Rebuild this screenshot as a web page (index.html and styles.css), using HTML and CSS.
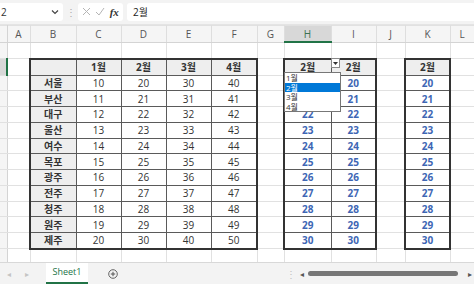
FILE: index.html
```html
<!DOCTYPE html>
<html lang="ko">
<head>
  <meta charset="UTF-8" />
  <title>월별 선택</title>
  <link rel="stylesheet" href="styles.css">
</head>
<body>
  <div class="formula-bar">
    <div class="name-box">
      <span>2</span>
      <svg width="8" height="6" viewBox="0 0 8 6"><path d="M1 1.5 L4 4.5 L7 1.5" fill="none" stroke="#444" stroke-width="1.2"/></svg>
    </div>
    <span class="grip">⋮</span>
    <div class="fx-box">
      <svg width="9" height="9" viewBox="0 0 9 9"><path d="M1 1 L8 8 M8 1 L1 8" stroke="#b5b5b5" stroke-width="1"/></svg>
      <svg width="10" height="9" viewBox="0 0 10 9"><path d="M1 5 L4 8 L9 1" fill="none" stroke="#b5b5b5" stroke-width="1"/></svg>
      <i class="fx">fx</i>
    </div>
    <div class="formula">2월</div>
  </div>

  <div class="sheet-wrap">
    <table class="sheet">
      <colgroup>
        <col style="width:7px"><col style="width:23px"><col style="width:46px"><col style="width:45px"><col style="width:45px"><col style="width:45px"><col style="width:46px"><col style="width:27px"><col style="width:47px"><col style="width:45px"><col style="width:29px"><col style="width:45px"><col style="width:24px">
      </colgroup>
      <tr class="col-head">
        <th class="rh"></th><th>A</th><th>B</th><th>C</th><th>D</th><th>E</th><th>F</th><th>G</th><th class="sel">H</th><th>I</th><th>J</th><th>K</th><th>L</th>
      </tr>
      <tr>
        <td class="rh"></td><td></td><td></td><td></td><td></td><td></td><td></td><td></td><td></td><td></td><td></td><td></td><td></td>
      </tr>
      <tr>
        <td class="rh sel"></td><td></td>
        <td class="hd top lft"></td><td class="hd top">1월</td><td class="hd top">2월</td><td class="hd top">3월</td><td class="hd top rgt">4월</td>
        <td></td>
        <td class="hd top lft">2월</td><td class="hd top rgt">2월</td>
        <td></td>
        <td class="hd top lft rgt">2월</td>
        <td></td>
      </tr>
      <tr>
        <td class="rh"></td><td></td>
        <td class="lb lft">서울</td><td class="nm">10</td><td class="nm">20</td><td class="nm">30</td><td class="nm rgt">40</td>
        <td></td><td class="bl lft">20</td><td class="bl rgt">20</td><td></td><td class="bl lft rgt">20</td><td></td>
      </tr>
      <tr>
        <td class="rh"></td><td></td>
        <td class="lb lft">부산</td><td class="nm">11</td><td class="nm">21</td><td class="nm">31</td><td class="nm rgt">41</td>
        <td></td><td class="bl lft">21</td><td class="bl rgt">21</td><td></td><td class="bl lft rgt">21</td><td></td>
      </tr>
      <tr>
        <td class="rh"></td><td></td>
        <td class="lb lft">대구</td><td class="nm">12</td><td class="nm">22</td><td class="nm">32</td><td class="nm rgt">42</td>
        <td></td><td class="bl lft">22</td><td class="bl rgt">22</td><td></td><td class="bl lft rgt">22</td><td></td>
      </tr>
      <tr>
        <td class="rh"></td><td></td>
        <td class="lb lft">울산</td><td class="nm">13</td><td class="nm">23</td><td class="nm">33</td><td class="nm rgt">43</td>
        <td></td><td class="bl lft">23</td><td class="bl rgt">23</td><td></td><td class="bl lft rgt">23</td><td></td>
      </tr>
      <tr>
        <td class="rh"></td><td></td>
        <td class="lb lft">여수</td><td class="nm">14</td><td class="nm">24</td><td class="nm">34</td><td class="nm rgt">44</td>
        <td></td><td class="bl lft">24</td><td class="bl rgt">24</td><td></td><td class="bl lft rgt">24</td><td></td>
      </tr>
      <tr>
        <td class="rh"></td><td></td>
        <td class="lb lft">목포</td><td class="nm">15</td><td class="nm">25</td><td class="nm">35</td><td class="nm rgt">45</td>
        <td></td><td class="bl lft">25</td><td class="bl rgt">25</td><td></td><td class="bl lft rgt">25</td><td></td>
      </tr>
      <tr>
        <td class="rh"></td><td></td>
        <td class="lb lft">광주</td><td class="nm">16</td><td class="nm">26</td><td class="nm">36</td><td class="nm rgt">46</td>
        <td></td><td class="bl lft">26</td><td class="bl rgt">26</td><td></td><td class="bl lft rgt">26</td><td></td>
      </tr>
      <tr>
        <td class="rh"></td><td></td>
        <td class="lb lft">전주</td><td class="nm">17</td><td class="nm">27</td><td class="nm">37</td><td class="nm rgt">47</td>
        <td></td><td class="bl lft">27</td><td class="bl rgt">27</td><td></td><td class="bl lft rgt">27</td><td></td>
      </tr>
      <tr>
        <td class="rh"></td><td></td>
        <td class="lb lft">청주</td><td class="nm">18</td><td class="nm">28</td><td class="nm">38</td><td class="nm rgt">48</td>
        <td></td><td class="bl lft">28</td><td class="bl rgt">28</td><td></td><td class="bl lft rgt">28</td><td></td>
      </tr>
      <tr>
        <td class="rh"></td><td></td>
        <td class="lb lft">원주</td><td class="nm">19</td><td class="nm">29</td><td class="nm">39</td><td class="nm rgt">49</td>
        <td></td><td class="bl lft">29</td><td class="bl rgt">29</td><td></td><td class="bl lft rgt">29</td><td></td>
      </tr>
      <tr>
        <td class="rh"></td><td></td>
        <td class="lb lft bot">제주</td><td class="nm bot">20</td><td class="nm bot">30</td><td class="nm bot">40</td><td class="nm rgt bot">50</td>
        <td></td><td class="bl lft bot">30</td><td class="bl rgt bot">30</td><td></td><td class="bl lft rgt bot">30</td><td></td>
      </tr>
      <tr>
        <td class="rh"></td><td></td><td></td><td></td><td></td><td></td><td></td><td></td><td></td><td></td><td></td><td></td><td></td>
      </tr>
      <tr>
        <td class="rh"></td><td></td><td></td><td></td><td></td><td></td><td></td><td></td><td></td><td></td><td></td><td></td><td></td>
      </tr>
    </table>
  </div>

  <div class="tab-bar">
    <span class="nav">◂</span>
    <span class="nav">▸</span>
    <div class="tab">Sheet1</div>
    <svg class="add" width="10" height="10" viewBox="0 0 10 10"><circle cx="5" cy="5" r="4.3" fill="none" stroke="#555" stroke-width="0.9"/><path d="M5 2.8 V7.2 M2.8 5 H7.2" stroke="#555" stroke-width="1"/></svg>
    <div class="hscroll">
      <span class="grip">⋮</span>
      <span class="arrow">◂</span>
      <div class="thumb"></div>
      <span class="arrow">▸</span>
    </div>
  </div>

  <!-- 열린 드롭다운 목록 -->
  <div class="dd-btn">
    <svg width="5" height="3" viewBox="0 0 5 3"><path d="M0 0 H5 L2.5 3 Z" fill="#333"/></svg>
  </div>
  <ul class="dd-list">
    <li>1월</li>
    <li class="on">2월</li>
    <li>3월</li>
    <li>4월</li>
  </ul>
</body>
</html>
```

FILE: styles.css
```css
html, body {
  margin: 0;
  width: 474px;
  height: 284px;
  overflow: hidden;
}

body {
  display: flex;
  flex-direction: column;
  font-family: "Open Sans", "Noto Sans CJK KR", sans-serif;
  font-size: 10px;
  color: #222;
  background: #fff;
  position: relative;
}

.formula-bar {
  height: 25px;
  flex: none;
  display: flex;
  align-items: center;
  background: #f3f3f3;
  border-bottom: 1px solid #e4e4e4;
  box-sizing: border-box;
  padding: 0 0 1px;
}

.name-box {
  flex: none;
  width: 63px;
  height: 18px;
  padding: 0 4px 0 1px;
  box-sizing: border-box;
  display: flex;
  align-items: center;
  justify-content: space-between;
  background: #fff;
  border-radius: 0 3px 3px 0;
  font-size: 10px;
  color: #333;
}

.grip {
  color: #aaa;
  font-size: 10px;
  width: 15px;
  text-align: center;
}

.fx-box {
  width: 45px;
  height: 18px;
  background: #fff;
  border-radius: 3px;
  display: flex;
  align-items: center;
  justify-content: space-around;
  padding: 0 2px;
  box-sizing: border-box;
}

.fx {
  font-family: "Liberation Serif", serif;
  font-weight: bold;
  font-size: 11px;
  color: #333;
}

.formula {
  flex: 1;
  height: 18px;
  margin-left: 4px;
  background: #fff;
  border-radius: 3px 0 0 3px;
  padding-left: 6px;
  display: flex;
  align-items: center;
  color: #222;
}

.sheet-wrap {
  flex: 1;
  overflow: hidden;
}

.sheet {
  border-collapse: collapse;
  table-layout: fixed;
  width: 474px;
}

.sheet th,
.sheet td {
  height: 14.75px;
  padding: 0;
  border: 1px solid #e1e1e1;
  text-align: center;
  white-space: nowrap;
  overflow: hidden;
  line-height: 14px;
}

.col-head th {
  height: 15px;
  background: #f5f5f5;
  font-weight: normal;
  color: #555;
  border-color: #e1e1e1 #dedede #d4d4d4;
}

.col-head th.sel {
  background: #d8d8d8;
  border-bottom: 2px solid #217346;
  color: #3b7352;
}

.sheet .rh {
  background: #f5f5f5;
  border-left: none;
  border-right-color: #d4d4d4;
}

.sheet .rh.sel {
  background: #d8d8d8;
  border-right: 2px solid #217346;
}

.sheet .hd,
.sheet .lb {
  background: #eeeeee;
  font-weight: bold;
  color: #333;
  border: 1px solid #5a5a5a;
}

.sheet .nm {
  border: 1px solid #5a5a5a;
  color: #333;
}

.sheet .bl {
  border: 1px solid #5a5a5a;
  color: #3e66b4;
  font-weight: bold;
}

.sheet .top { border-top: 2px solid #333; }
.sheet .bot { border-bottom: 2px solid #333; }
.sheet .lft { border-left: 2px solid #333; }
.sheet .rgt { border-right: 2px solid #333; }

.tab-bar {
  height: 21px;
  flex: none;
  display: flex;
  align-items: center;
  background: #f3f3f3;
  border-top: 1px solid #d8d8d8;
  color: #bbb;
}

.nav {
  width: 18px;
  text-align: center;
  font-size: 8px;
  color: #c4c4c4;
}

.tab {
  margin-left: 10px;
  width: 42px;
  height: 21px;
  box-sizing: border-box;
  background: #fff;
  color: #217346;
  text-align: center;
  line-height: 17px;
  font-size: 9px;
  border-bottom: 2px solid #217346;
}

.add {
  margin-left: 20px;
}

.hscroll {
  margin-left: auto;
  width: 190px;
  display: flex;
  align-items: center;
}

.hscroll .grip {
  width: 14px;
  color: #c0c0c0;
}

.arrow {
  font-size: 8px;
  color: #555;
  width: 8px;
  text-align: center;
}

.thumb {
  flex: 1;
  height: 5px;
  margin: 0 8px 0 2px;
  background: #777;
  border-radius: 3px;
}

.dd-btn {
  position: absolute;
  left: 331px;
  top: 58px;
  width: 9px;
  height: 10px;
  box-sizing: border-box;
  border: 1px solid #888;
  background: #fff;
  display: flex;
  align-items: center;
  justify-content: center;
}

.dd-list {
  position: absolute;
  left: 284px;
  top: 72px;
  width: 57px;
  margin: 0;
  padding: 0;
  list-style: none;
  background: #fff;
  border: 1px solid #777;
  box-sizing: border-box;
  font-size: 8px;
  color: #333;
}

.dd-list li {
  height: 9.5px;
  line-height: 9.5px;
  padding-left: 1px;
}

.dd-list li.on {
  background: #0078d7;
  color: #fff;
}
```
